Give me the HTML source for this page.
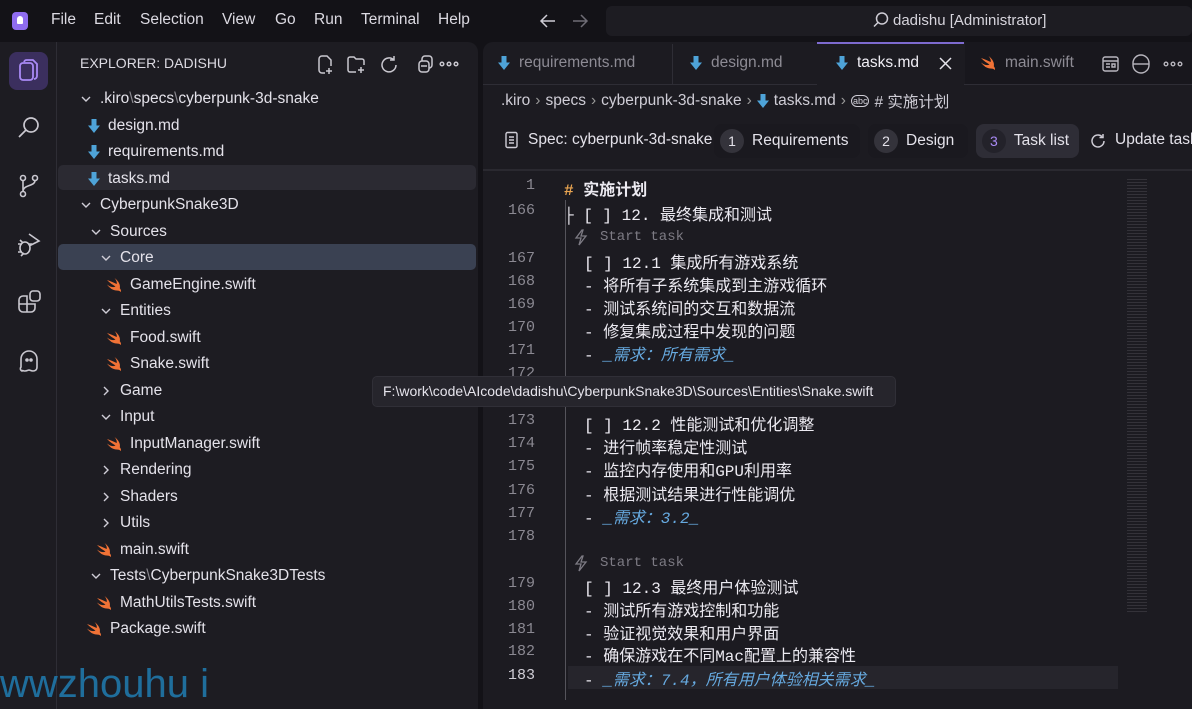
<!DOCTYPE html>
<html><head><meta charset="utf-8"><style>
*{margin:0;padding:0;box-sizing:border-box}
body{width:1192px;height:709px;background:#131217;overflow:hidden;position:relative;font-family:"Liberation Sans","Noto Sans CJK SC",sans-serif;color:#e6e4ec}
.a{position:absolute;white-space:nowrap}
.menu{top:11px;font-size:15.5px;color:#dcdae2}
.side{left:0;top:42px;width:478px;height:667px;background:#1d1c22;border-top-right-radius:10px}
.act{left:0;top:42px;width:57px;height:667px;border-right:1px solid #2e2d35}
.ed{left:483px;top:42px;width:709px;height:667px;background:#1c1b21;border-top-left-radius:10px}
.tree{font-size:15.5px;color:#e4e2ea;display:flex;align-items:center;height:20px}
.tree svg{margin-right:8px;flex:none}
.ln{font-family:"Liberation Mono","Noto Sans CJK SC",monospace;font-size:15px;color:#8b8992;width:50px;text-align:right;left:485px}
.tx{font-family:"Liberation Mono","Noto Sans CJK SC",monospace;font-size:16px;color:#eceaf1;left:584px}
.req{color:#66a9df;font-style:italic}
.st{font-family:"Liberation Mono",monospace;font-size:14px;color:#7d7b84}
.pill{top:124px;height:34px;border-radius:8px;background:#25242b;font-size:15.5px;color:#e4e2ea;padding:0 10px 0 6px;display:flex;align-items:center}
.num{width:24px;height:24px;border-radius:12px;background:#34333b;display:inline-flex;align-items:center;justify-content:center;font-size:14px;margin-right:8px}
.tab{top:52px;font-size:15.5px;display:flex;align-items:center;height:22px}
.tab svg{margin-right:9px}
</style></head><body>
<svg width="0" height="0" style="position:absolute"><defs>
<symbol id="md" viewBox="0 0 12 14"><path d="M3.5 0h5v6.5h3.5L6 14 0 6.5h3.5z" fill="#4ea3d8"/></symbol>
<symbol id="sw" viewBox="0 0 16 14"><path d="M1 2c3 3 6 5 8.5 6.5C6.5 10 3.5 8.5 1 6.5c2.5 3.5 6 6 9.5 6 1.7 0 3 .3 4.5 1.5.2-1.5-.4-3-1.2-3.8C14.5 7 13 3.5 8.5 0c1.8 2 2.6 4.3 2.2 6C8 4.7 4 3 1 2z" fill="#f07236"/></symbol>
<symbol id="dn" viewBox="0 0 12 12"><path d="M2 4l4 4 4-4" fill="none" stroke="#cfcdd6" stroke-width="1.4"/></symbol>
<symbol id="rt" viewBox="0 0 12 12"><path d="M4 2l4 4-4 4" fill="none" stroke="#cfcdd6" stroke-width="1.4"/></symbol>
</defs></svg>
<!-- title bar -->
<div class="a" style="left:12px;top:12px;width:16px;height:18px;background:#8f6cf0;border-radius:4px"></div>
<div class="a" style="left:17px;top:16px;width:6px;height:8px;background:#fff;border-radius:3px 3px 1px 1px"></div>
<div class="a menu" style="left:51px">File</div>
<div class="a menu" style="left:94px">Edit</div>
<div class="a menu" style="left:140px">Selection</div>
<div class="a menu" style="left:222px">View</div>
<div class="a menu" style="left:275px">Go</div>
<div class="a menu" style="left:314px">Run</div>
<div class="a menu" style="left:361px">Terminal</div>
<div class="a menu" style="left:438px">Help</div>
<svg class="a" style="left:539px;top:12px" width="18" height="18" viewBox="0 0 18 18" fill="none" stroke="#cfcdd6" stroke-width="1.5"><path d="M16 9H2M8 3 2 9l6 6"/></svg>
<svg class="a" style="left:571px;top:12px" width="18" height="18" viewBox="0 0 18 18" fill="none" stroke="#6f6d76" stroke-width="1.5"><path d="M2 9h14M10 3l6 6-6 6"/></svg>
<div class="a" style="left:606px;top:6px;width:586px;height:30px;background:#1d1c22;border-radius:6px"></div>
<svg class="a" style="left:872px;top:11px" width="18" height="18" viewBox="0 0 18 18"><circle cx="10" cy="7.5" r="5.5" fill="none" stroke="#cfcdd6" stroke-width="1.5"/><path d="M6 11.5 2 15.5" stroke="#cfcdd6" stroke-width="1.5"/></svg>
<div class="a" style="left:893px;top:12px;font-size:15px;color:#d6d4dc">dadishu [Administrator]</div>

<!-- sidebar -->
<div class="a side"></div>
<div class="a act"></div>
<div class="a" style="left:9px;top:52px;width:39px;height:38px;background:#3b2f5e;border-radius:8px"></div>
<svg class="a" style="left:15px;top:57px" width="28" height="28" viewBox="0 0 28 28" fill="none" stroke="#a98af5" stroke-width="1.8"><rect x="5" y="6" width="13" height="17" rx="3"/><path d="M9 5 a3 3 0 0 1 3-2 h6 l4 4 v12 a3 3 0 0 1-3 3"/></svg>
<svg class="a" style="left:15px;top:113px" width="28" height="28" viewBox="0 0 28 28" fill="none" stroke="#cac8d0" stroke-width="1.7"><circle cx="16" cy="12" r="7"/><path d="M11 17 4 24"/></svg>
<svg class="a" style="left:15px;top:172px" width="28" height="28" viewBox="0 0 28 28" fill="none" stroke="#cac8d0" stroke-width="1.6"><circle cx="8" cy="6" r="2.5"/><circle cx="20" cy="6" r="2.5"/><circle cx="8" cy="22" r="2.5"/><path d="M8 8.5v11M20 8.5c0 6-12 4-12 11"/></svg>
<svg class="a" style="left:15px;top:230px" width="28" height="28" viewBox="0 0 28 28" fill="none" stroke="#cac8d0" stroke-width="1.6"><path d="M14 4l10 7-10 5"/><ellipse cx="10" cy="18" rx="5" ry="6"/><path d="M3 14h4M3 22h4M13 14h4M5 10l3 3M6 26l3-3"/></svg>
<svg class="a" style="left:15px;top:288px" width="28" height="28" viewBox="0 0 28 28" fill="none" stroke="#cac8d0" stroke-width="1.6"><path d="M12 8H8a4 4 0 0 0-4 4v8a4 4 0 0 0 4 4h8a4 4 0 0 0 4-4v-4H12zM4 16h16M12 16v8"/><rect x="15" y="3" width="10" height="10" rx="3"/></svg>
<svg class="a" style="left:15px;top:347px" width="28" height="28" viewBox="0 0 28 28" fill="none" stroke="#cac8d0" stroke-width="1.6"><path d="M7 24c-2-1-2-3-1-4V12a8 8 0 0 1 16 0v8c0 3-2 4-4 4-2 0-3-1-4-1s-2 1-4 1-2-1-3 0z"/><circle cx="12" cy="13" r="1" fill="#cac8d0"/><circle cx="16" cy="13" r="1" fill="#cac8d0"/></svg>

<div class="a" style="left:80px;top:55px;font-size:14px;color:#dcdae2">EXPLORER: DADISHU</div>
<svg class="a" style="left:312px;top:52px" width="150" height="24" viewBox="0 0 150 24" fill="none" stroke="#cac8d0" stroke-width="1.5"><path d="M10 4h5l4 4v6M10 4a3 3 0 0 0-3 3v11a3 3 0 0 0 3 3h3M17 16v6M14 19h6"/><path d="M36 7a2 2 0 0 1 2-2h4l2 2h6a2 2 0 0 1 2 2v4M36 7v11a2 2 0 0 0 2 2h6M49 15v6M46 18h6"/><path d="M82 8a7 7 0 1 0 2 5M82 4v4h-4"/><rect x="107" y="9" width="10" height="11" rx="3"/><path d="M110 9V7a3 3 0 0 1 3-3h4a3 3 0 0 1 3 3v6a3 3 0 0 1-3 3M109 14h6"/><circle cx="130" cy="12" r="1.8"/><circle cx="137" cy="12" r="1.8"/><circle cx="144" cy="12" r="1.8"/></svg>

<div class="a" style="left:58px;top:165px;width:418px;height:25px;background:#2b2a32;border-radius:5px"></div>
<div class="a" style="left:58px;top:244px;width:418px;height:26px;background:#3a4152;border-radius:5px"></div>

<div class="a tree" style="left:80px;top:89px"><svg width="12" height="12"><use href="#dn"/></svg>.kiro<span style="color:#8a8890">\</span>specs<span style="color:#8a8890">\</span>cyberpunk-3d-snake</div>
<div class="a tree" style="left:88px;top:116px"><svg width="12" height="14"><use href="#md"/></svg>design.md</div>
<div class="a tree" style="left:88px;top:142px"><svg width="12" height="14"><use href="#md"/></svg>requirements.md</div>
<div class="a tree" style="left:88px;top:169px"><svg width="12" height="14"><use href="#md"/></svg>tasks.md</div>
<div class="a tree" style="left:80px;top:195px"><svg width="12" height="12"><use href="#dn"/></svg>CyberpunkSnake3D</div>
<div class="a tree" style="left:90px;top:222px"><svg width="12" height="12"><use href="#dn"/></svg>Sources</div>
<div class="a tree" style="left:100px;top:248px"><svg width="12" height="12"><use href="#dn"/></svg>Core</div>
<div class="a tree" style="left:106px;top:275px"><svg width="16" height="14"><use href="#sw"/></svg>GameEngine.swift</div>
<div class="a tree" style="left:100px;top:301px"><svg width="12" height="12"><use href="#dn"/></svg>Entities</div>
<div class="a tree" style="left:106px;top:328px"><svg width="16" height="14"><use href="#sw"/></svg>Food.swift</div>
<div class="a tree" style="left:106px;top:354px"><svg width="16" height="14"><use href="#sw"/></svg>Snake.swift</div>
<div class="a tree" style="left:100px;top:381px"><svg width="12" height="12"><use href="#rt"/></svg>Game</div>
<div class="a tree" style="left:100px;top:407px"><svg width="12" height="12"><use href="#dn"/></svg>Input</div>
<div class="a tree" style="left:106px;top:434px"><svg width="16" height="14"><use href="#sw"/></svg>InputManager.swift</div>
<div class="a tree" style="left:100px;top:460px"><svg width="12" height="12"><use href="#rt"/></svg>Rendering</div>
<div class="a tree" style="left:100px;top:487px"><svg width="12" height="12"><use href="#rt"/></svg>Shaders</div>
<div class="a tree" style="left:100px;top:513px"><svg width="12" height="12"><use href="#rt"/></svg>Utils</div>
<div class="a tree" style="left:96px;top:540px"><svg width="16" height="14"><use href="#sw"/></svg>main.swift</div>
<div class="a tree" style="left:90px;top:566px"><svg width="12" height="12"><use href="#dn"/></svg>Tests<span style="color:#8a8890">\</span>CyberpunkSnake3DTests</div>
<div class="a tree" style="left:96px;top:593px"><svg width="16" height="14"><use href="#sw"/></svg>MathUtilsTests.swift</div>
<div class="a tree" style="left:86px;top:619px"><svg width="16" height="14"><use href="#sw"/></svg>Package.swift</div>
<div class="a" style="left:0px;top:662px;font-size:40px;color:#1f6e9c">wwzhouhu i</div>

<!-- editor -->
<div class="a ed"></div>
<div class="a" style="left:483px;top:84px;width:709px;height:1px;background:#2e2d35"></div>
<div class="a" style="left:817px;top:42px;width:147px;height:43px;background:#1c1b21;border-top:2px solid #7e6bd0"></div>
<div class="a" style="left:965px;top:42px;width:227px;height:42px;background:#18171d"></div>
<div class="a" style="left:672px;top:44px;width:1px;height:40px;background:#2e2d35"></div>
<div class="a tab" style="left:498px;color:#8d8b94"><svg width="12" height="14"><use href="#md"/></svg>requirements.md</div>
<div class="a tab" style="left:690px;color:#8d8b94"><svg width="12" height="14"><use href="#md"/></svg>design.md</div>
<div class="a tab" style="left:836px;color:#f0eef5"><svg width="12" height="14"><use href="#md"/></svg>tasks.md</div>
<svg class="a" style="left:939px;top:57px" width="13" height="13" viewBox="0 0 13 13" stroke="#e6e4ec" stroke-width="1.5"><path d="M1 1l11 11M12 1 1 12"/></svg>
<div class="a tab" style="left:980px;color:#8d8b94"><svg width="16" height="14"><use href="#sw"/></svg>main.swift</div>
<svg class="a" style="left:1100px;top:52px" width="90" height="24" viewBox="0 0 90 24" fill="none" stroke="#b8b6be" stroke-width="1.4"><rect x="3" y="5" width="15" height="14" rx="2"/><path d="M3 9h15M6 12h4M6 15h4M12 12h3v3h-3z"/><rect x="33" y="3" width="16" height="18" rx="8"/><path d="M33 12h16"/><circle cx="66" cy="12" r="1.8"/><circle cx="73" cy="12" r="1.8"/><circle cx="80" cy="12" r="1.8"/></svg>

<div class="a" style="left:501px;top:90px;font-size:15.5px;color:#cfcdd6;display:flex;align-items:center;gap:5px">.kiro <span style="color:#999">›</span> specs <span style="color:#999">›</span> cyberpunk-3d-snake <span style="color:#999">›</span> <svg width="12" height="14"><use href="#md"/></svg> tasks.md <span style="color:#999">›</span> <span style="border:1.5px solid #cfcdd6;border-radius:7px;font-size:9px;padding:0 1px">abc</span>#&nbsp;实施计划</div>

<svg class="a" style="left:504px;top:131px" width="16" height="18" viewBox="0 0 16 18" fill="none" stroke="#cfcdd6" stroke-width="1.4"><rect x="2" y="1.5" width="11" height="15" rx="1.5"/><path d="M5 6h5M5 9h5M5 12h5"/></svg>
<div class="a" style="left:528px;top:131px;font-size:15.5px;color:#e4e2ea">Spec: cyberpunk-3d-snake</div>
<div class="a pill" style="left:714px;width:146px;background:#1a191f"><span class="num">1</span>Requirements</div>
<div class="a pill" style="left:868px;width:100px;background:#1a191f"><span class="num">2</span>Design</div>
<div class="a pill" style="left:976px;width:103px;background:#2e2d36"><span class="num" style="color:#a98af5;background:#23222a">3</span>Task list</div>
<svg class="a" style="left:1089px;top:132px" width="18" height="18" viewBox="0 0 18 18" fill="none" stroke="#cfcdd6" stroke-width="1.5"><path d="M15 9a6 6 0 1 1-2-4.5M14 2v3.5h-3.5"/></svg>
<div class="a" style="left:1115px;top:131px;font-size:15.5px;color:#e4e2ea">Update tasks</div>
<div class="a" style="left:483px;top:169px;width:709px;height:2px;background:#2a2930"></div>

<div class="a" style="left:1127px;top:177px;width:20px;height:435px;opacity:.3;background:repeating-linear-gradient(#1c1b21 0 2px,#6a6970 2px 3px)"></div>
<div class="a" style="left:565px;top:200px;width:1px;height:500px;background:#55545b"></div>
<div class="a" style="left:568px;top:666px;width:550px;height:23px;background:#26252c"></div>

<div class="a ln" style="top:177px">1</div><div class="a tx" style="left:564px;top:176px;font-weight:bold"><span style="color:#e8a451">#</span> 实施计划</div>
<div class="a ln" style="top:202px">166</div><div class="a tx" style="left:564px;top:201px">├ [ ] 12. 最终集成和测试</div>
<svg class="a" style="left:573px;top:229px" width="16" height="17" viewBox="0 0 16 17" fill="none" stroke="#7d7b84" stroke-width="1.3"><path d="M9 1 3 9h5l-2 7 7-9H8l2-6z"/></svg>
<div class="a st" style="left:600px;top:229px">Start task</div>
<div class="a ln" style="top:250px">167</div><div class="a tx" style="top:249px">[ ] 12.1 集成所有游戏系统</div>
<div class="a ln" style="top:273px">168</div><div class="a tx" style="top:272px">- 将所有子系统集成到主游戏循环</div>
<div class="a ln" style="top:296px">169</div><div class="a tx" style="top:295px">- 测试系统间的交互和数据流</div>
<div class="a ln" style="top:319px">170</div><div class="a tx" style="top:318px">- 修复集成过程中发现的问题</div>
<div class="a ln" style="top:342px">171</div><div class="a tx" style="top:341px">- <span class="req">_需求：所有需求_</span></div>
<div class="a ln" style="top:365px">172</div>
<div class="a ln" style="top:412px">173</div><div class="a tx" style="top:411px">[ ] 12.2 性能测试和优化调整</div>
<div class="a ln" style="top:435px">174</div><div class="a tx" style="top:434px">- 进行帧率稳定性测试</div>
<div class="a ln" style="top:458px">175</div><div class="a tx" style="top:457px">- 监控内存使用和GPU利用率</div>
<div class="a ln" style="top:482px">176</div><div class="a tx" style="top:481px">- 根据测试结果进行性能调优</div>
<div class="a ln" style="top:505px">177</div><div class="a tx" style="top:504px">- <span class="req">_需求：3.2_</span></div>
<div class="a ln" style="top:528px">178</div>
<svg class="a" style="left:573px;top:555px" width="16" height="17" viewBox="0 0 16 17" fill="none" stroke="#7d7b84" stroke-width="1.3"><path d="M9 1 3 9h5l-2 7 7-9H8l2-6z"/></svg>
<div class="a st" style="left:600px;top:555px">Start task</div>
<div class="a ln" style="top:575px">179</div><div class="a tx" style="top:574px">[ ] 12.3 最终用户体验测试</div>
<div class="a ln" style="top:598px">180</div><div class="a tx" style="top:597px">- 测试所有游戏控制和功能</div>
<div class="a ln" style="top:621px">181</div><div class="a tx" style="top:620px">- 验证视觉效果和用户界面</div>
<div class="a ln" style="top:643px">182</div><div class="a tx" style="top:642px">- 确保游戏在不同Mac配置上的兼容性</div>
<div class="a ln" style="top:667px;color:#d0ced6">183</div><div class="a tx" style="top:666px">- <span class="req">_需求：7.4，所有用户体验相关需求_</span></div>

<!-- tooltip -->
<div class="a" style="left:372px;top:376px;width:524px;height:31px;background:#26252c;border-radius:5px;border:1px solid #302f37"></div>
<div class="a" style="left:383px;top:383px;font-size:14px;color:#e6e4ec">F:\work\code\AIcode\dadishu\CyberpunkSnake3D\Sources\Entities\Snake.swift</div>
</body></html>
